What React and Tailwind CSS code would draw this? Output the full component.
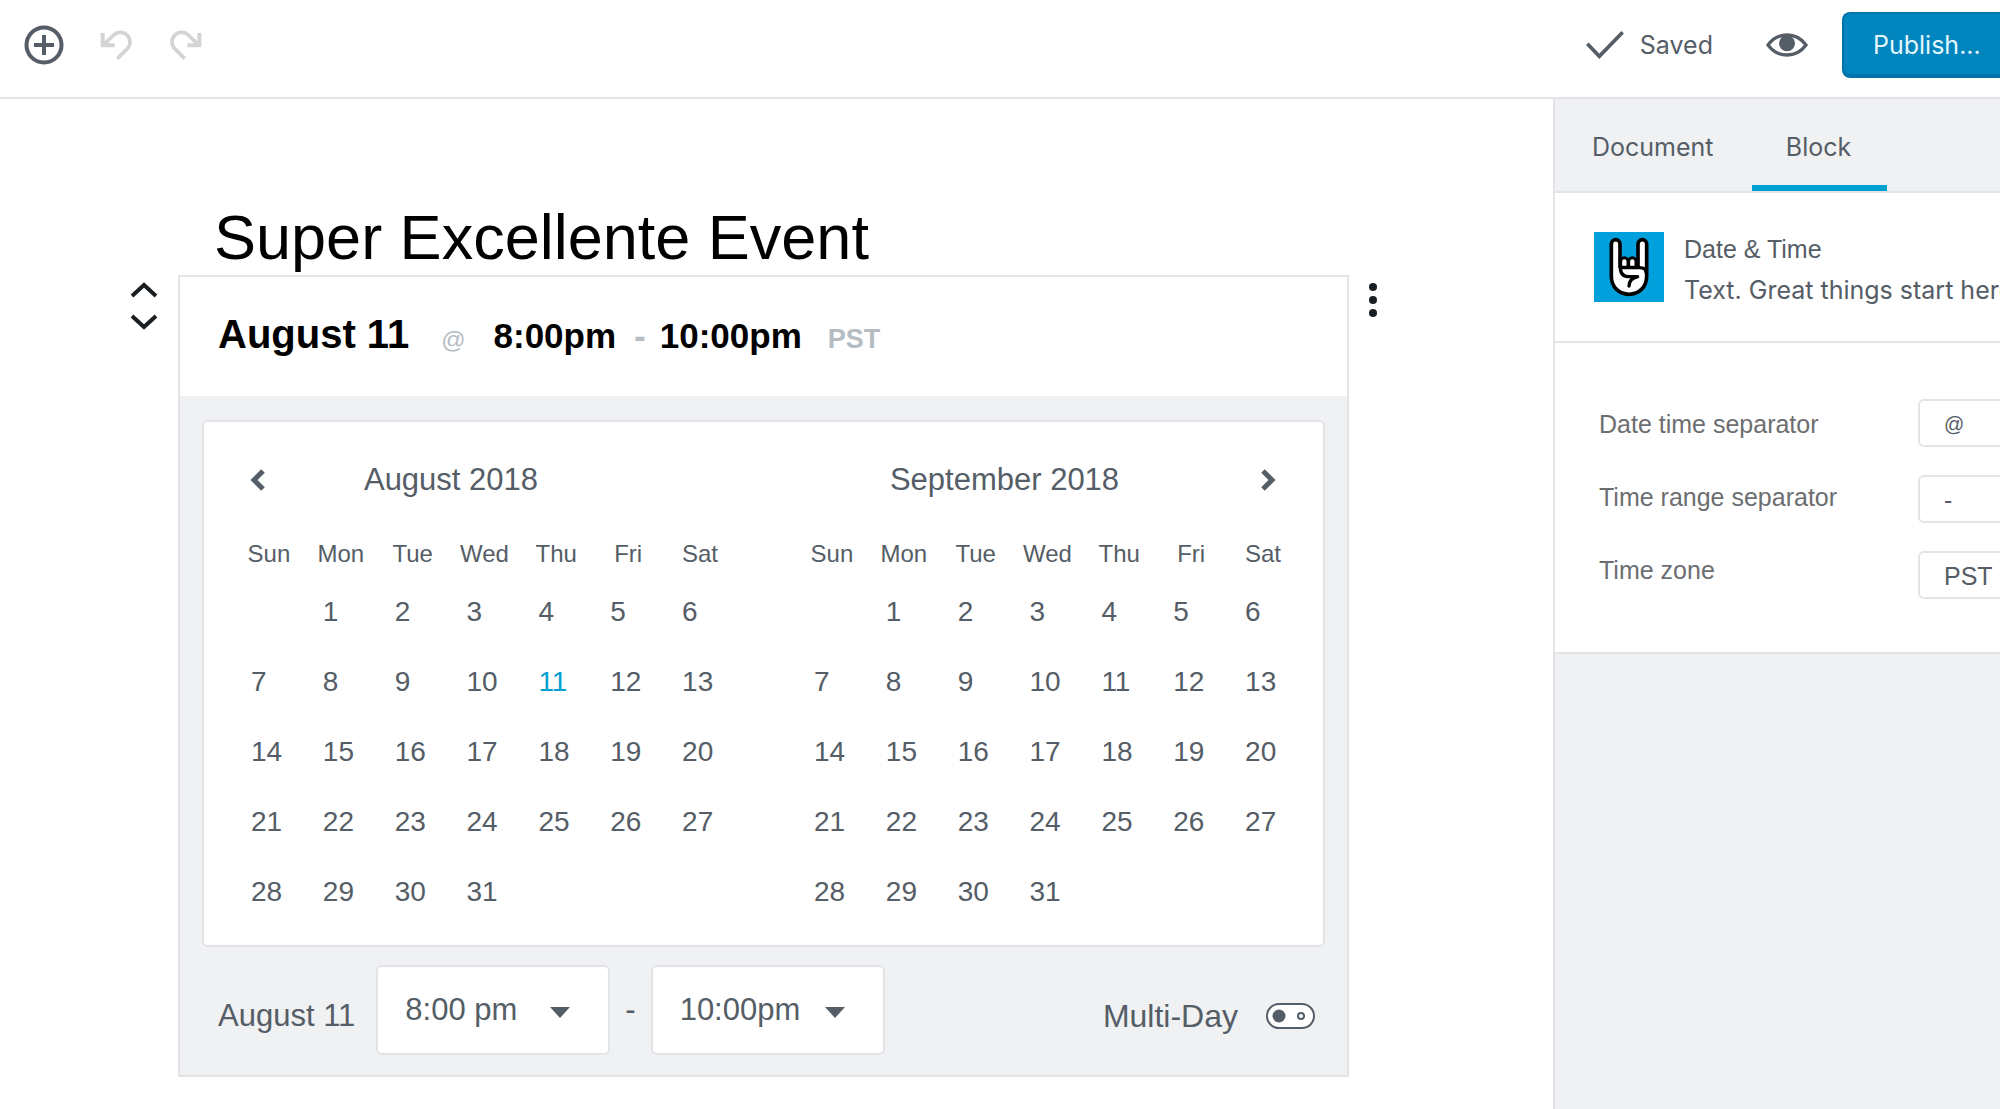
import { useState } from 'react';

const WEEKDAYS = ['Sun', 'Mon', 'Tue', 'Wed', 'Thu', 'Fri', 'Sat'];

const WEEKS = [
    [null, 1, 2, 3, 4, 5, 6],
    [7, 8, 9, 10, 11, 12, 13],
    [14, 15, 16, 17, 18, 19, 20],
    [21, 22, 23, 24, 25, 26, 27],
    [28, 29, 30, 31, null, null, null],
];

function AddIcon() {
    return (
        <svg width="40" height="40" viewBox="0 0 40 40" fill="none" stroke="#555d66" strokeWidth="4">
            <circle cx="20" cy="20" r="17.5" />
            <path d="M20 10v20M10 20h20" />
        </svg>
    );
}

function UndoIcon({ flip }) {
    return (
        <svg width="33" height="32" viewBox="0 0 99 96" fill="none" stroke="#d2d4d6" strokeWidth="12">
            <g transform={flip ? 'translate(99 0) scale(-1 1)' : undefined}>
                <path d="M8 12v37h36" />
                <path d="M9 49L41 18A29 29 0 0 1 82 59L52 89" strokeWidth="11" />
            </g>
        </svg>
    );
}

function CheckIcon() {
    return (
        <svg width="38" height="28" viewBox="0 0 114 84" fill="none" stroke="#555d66" strokeWidth="11">
            <path d="M4 38l36 38 70-72" />
        </svg>
    );
}

function EyeIcon() {
    return (
        <svg width="42" height="24" viewBox="0 0 126 72">
            <path d="M6 36C22 14 42 6 63 6s41 8 57 30C104 58 84 66 63 66S22 58 6 36z" fill="none" stroke="#555d66" strokeWidth="10" />
            <circle cx="63" cy="31" r="24" fill="#555d66" />
        </svg>
    );
}

function RockIcon() {
    return (
        <svg className="shrink-0" width="70" height="70" viewBox="0 0 210 210">
            <rect width="210" height="210" fill="#00a0dd" />
            <g fill="#fff" stroke="#000" strokeWidth="11" strokeLinejoin="round" strokeLinecap="round">
                <path d="M52 36a13 13 0 0 1 26 0v69h54V36a13 13 0 0 1 26 0v96c0 34-24 55-53 55s-53-21-53-55z" />
                <path d="M80 106V88a11 11 0 0 1 22 0v18zM104 106V88a11 11 0 0 1 22 0v18z" strokeWidth="9" />
                <path d="M79 107h57c14 0 20 6 20 14M79 107c0 18 10 27 28 27h24c-16 4-26 12-26 28" fill="none" strokeWidth="10" />
            </g>
        </svg>
    );
}

function Chevron({ d, width, height, color, stroke }) {
    return (
        <svg width={width} height={height} viewBox={`0 0 ${width} ${height}`} fill="none" stroke={color} strokeWidth={stroke}>
            <path d={d} />
        </svg>
    );
}

function Month({ selected, onSelect }) {
    return (
        <table className="w-full table-fixed">
            <thead>
                <tr className="h-[46px] text-2xl">
                    {WEEKDAYS.map(day => (
                        <th key={day} scope="col" className="p-0 text-center font-normal">{day}</th>
                    ))}
                </tr>
            </thead>
            <tbody>
                {WEEKS.map((week, i) => (
                    <tr key={i} className="h-[70px] text-[28px]">
                        {week.map((day, j) => (
                            <td key={j} className="p-0 pl-[18px] text-left">
                                {day && (
                                    <button
                                        type="button"
                                        onClick={() => onSelect(day)}
                                        className={selected === day ? 'text-[#00a0d2]' : ''}
                                    >
                                        {day}
                                    </button>
                                )}
                            </td>
                        ))}
                    </tr>
                ))}
            </tbody>
        </table>
    );
}

function TimeSelect({ label, value }) {
    return (
        <div className="relative">
            <select
                aria-label={label}
                defaultValue={value}
                className="h-[90px] w-[234px] appearance-none rounded-md border-2 border-[#e2e4e7] bg-white pl-[27px] text-[31px]"
            >
                <option>{value}</option>
            </select>
            <svg className="pointer-events-none absolute top-[42px] right-10" width="20" height="11" viewBox="0 0 20 11">
                <path d="M0 0h20L10 11z" fill="#555d66" />
            </svg>
        </div>
    );
}

function Header() {
    return (
        <header className="flex h-[99px] shrink-0 items-start border-b-2 border-[#e2e4e7]">
            <div className="flex h-[90px] items-center gap-9 pl-6">
                <button type="button" aria-label="Add block"><AddIcon /></button>
                <button type="button" aria-label="Undo"><UndoIcon /></button>
                <button type="button" aria-label="Redo"><UndoIcon flip /></button>
            </div>
            <div className="ml-auto flex h-[90px] items-center font-['Inter'] text-[25px]">
                <CheckIcon />
                <span className="ml-4 pt-[2px]">Saved</span>
                <button type="button" aria-label="Preview" className="ml-[53px]"><EyeIcon /></button>
                <button
                    type="button"
                    className="ml-[34px] h-[66px] w-[158px] rounded-l-lg border-2 border-r-0 border-b-4 border-[#0073aa] bg-[#0085be] pt-1 pl-[29px] text-left text-[#e3f6fd]"
                >
                    Publish...
                </button>
            </div>
        </header>
    );
}

function Sidebar() {
    return (
        <aside className="w-[447px] shrink-0 overflow-hidden border-l-2 border-[#e2e4e7] bg-[#eff1f3] font-['Inter'] text-[25px]">
            <div role="tablist" className="flex h-[94px] border-b-2 border-[#e2e4e7]">
                <button type="button" role="tab" className="w-[197px] pt-[6px] pl-[37px] text-left">Document</button>
                <button type="button" role="tab" aria-selected="true" className="w-[135px] border-b-6 border-[#00a0d2] pt-3 pr-[2px]">Block</button>
            </div>

            <div className="flex h-[150px] gap-5 border-b-2 border-[#e2e4e7] bg-white pt-[39px] pl-[39px]">
                <RockIcon />
                <div className="-mt-[3px] whitespace-nowrap">
                    <h2 className="font-['Liberation_Sans'] leading-[41px]">Date &amp; Time</h2>
                    <p className="leading-[41px]">Text. Great things start here.</p>
                </div>
            </div>

            <div className="flex justify-between border-b-2 border-[#e2e4e7] bg-white pt-14 pb-[53px] pl-11 font-['Liberation_Sans']">
                <div className="flex flex-col gap-[33px] pt-[5px] leading-10 text-[#6c6e70]">
                    <label htmlFor="date-separator">Date time separator</label>
                    <label htmlFor="range-separator">Time range separator</label>
                    <label htmlFor="time-zone">Time zone</label>
                </div>
                <div className="flex w-[82px] flex-col gap-7">
                    <input id="date-separator" defaultValue="@" className="h-12 w-full rounded-l-md border-2 border-r-0 border-[#e2e4e7] pt-[2px] pl-6 text-xl" />
                    <input id="range-separator" defaultValue="-" className="h-12 w-full rounded-l-md border-2 border-r-0 border-[#e2e4e7] pt-[2px] pl-6" />
                    <input id="time-zone" defaultValue="PST" className="h-12 w-full rounded-l-md border-2 border-r-0 border-[#e2e4e7] pt-[2px] pl-6" />
                </div>
            </div>
        </aside>
    );
}

function EventBlock() {
    const [selected, setSelected] = useState(11);
    const [multiDay, setMultiDay] = useState(false);

    return (
        <section className="min-w-0 flex-1 border-2 border-[#e2e4e7] bg-[#eff1f3]">
            <div className="flex h-[119px] items-baseline bg-white pt-[27px] pl-[38px] font-bold text-black">
                <span className="text-[40px]">August 11</span>
                <span className="ml-8 text-2xl font-normal text-[#b5bcc2]">@</span>
                <span className="ml-7 text-[35px]">8:00pm</span>
                <span className="ml-[18px] text-[35px] text-[#b5bcc2]">-</span>
                <span className="ml-[14px] text-[35px]">10:00pm</span>
                <span className="ml-[26px] text-[27px] text-[#b5bcc2]">PST</span>
            </div>

            <div className="mx-[22px] mt-6 flex gap-[60px] rounded-md border-2 border-[#e2e4e7] bg-white pt-9 pr-6 pb-[18px] pl-[29px]">
                <div className="flex-1">
                    <div className="mb-[29px] flex h-11 items-center pl-4">
                        <button type="button" aria-label="Previous month">
                            <Chevron width={16} height={22} color="#555d66" stroke={5} d="M14 2l-9 9 9 9" />
                        </button>
                        <h2 className="flex-1 pr-[99px] text-center text-[31px]">August 2018</h2>
                    </div>
                    <Month selected={selected} onSelect={setSelected} />
                </div>
                <div className="flex-1">
                    <div className="mb-[29px] flex h-11 items-center pr-[22px]">
                        <h2 className="flex-1 pr-12 text-center text-[31px]">September 2018</h2>
                        <button type="button" aria-label="Next month">
                            <Chevron width={16} height={22} color="#555d66" stroke={5} d="M2 2l9 9-9 9" />
                        </button>
                    </div>
                    <Month onSelect={() => {}} />
                </div>
            </div>

            <div className="flex items-center pt-[18px] pr-8 pb-5 pl-[38px] text-[31px]">
                <span className="pt-3">August {selected}</span>
                <div className="ml-[21px] flex items-center gap-[15px]">
                    <TimeSelect label="Start time" value="8:00 pm" />
                    <span>-</span>
                    <TimeSelect label="End time" value="10:00pm" />
                </div>
                <label className="ml-auto flex items-center gap-7 pt-3 text-[32px]">
                    Multi-Day
                    <input
                        type="checkbox"
                        className="peer sr-only"
                        checked={multiDay}
                        onChange={e => setMultiDay(e.target.checked)}
                    />
                    <svg width="49" height="26" viewBox="0 0 49 26">
                        <rect x="1" y="1" width="47" height="24" rx="12" fill="#fff" stroke="#555d66" strokeWidth="2" />
                        <circle cx={multiDay ? 36 : 13} cy="13" r="6.5" fill="#555d66" />
                        <circle cx={multiDay ? 14 : 35} cy="13" r="3" fill="none" stroke="#555d66" strokeWidth="2" />
                    </svg>
                </label>
            </div>
        </section>
    );
}

export default function App() {
    return (
        <div className="flex min-h-screen flex-col overflow-hidden bg-white font-['Liberation_Sans',sans-serif] text-[#555d66]">
            <Header />
            <div className="flex flex-1">
                <main className="min-w-0 flex-1 pt-[102px] pl-[130px]">
                    <h1 className="mb-[2px] pl-[84px] text-[63px] leading-[72px] text-black">Super Excellente Event</h1>
                    <div className="flex items-start gap-5">
                        <div className="flex w-7 flex-col items-center gap-4 pt-[5px]">
                            <button type="button" aria-label="Move up">
                                <Chevron width={28} height={18} color="#191e23" stroke={4} d="M2 16l12-11 12 11" />
                            </button>
                            <button type="button" aria-label="Move down">
                                <Chevron width={28} height={18} color="#191e23" stroke={4} d="M2 2l12 11 12-11" />
                            </button>
                        </div>
                        <EventBlock />
                        <button type="button" aria-label="More options" className="w-[184px] pt-2">
                            <svg width="8" height="34" viewBox="0 0 8 34" fill="#191e23">
                                <circle cx="4" cy="4" r="4" />
                                <circle cx="4" cy="17" r="4" />
                                <circle cx="4" cy="30" r="4" />
                            </svg>
                        </button>
                    </div>
                </main>
                <Sidebar />
            </div>
        </div>
    );
}
